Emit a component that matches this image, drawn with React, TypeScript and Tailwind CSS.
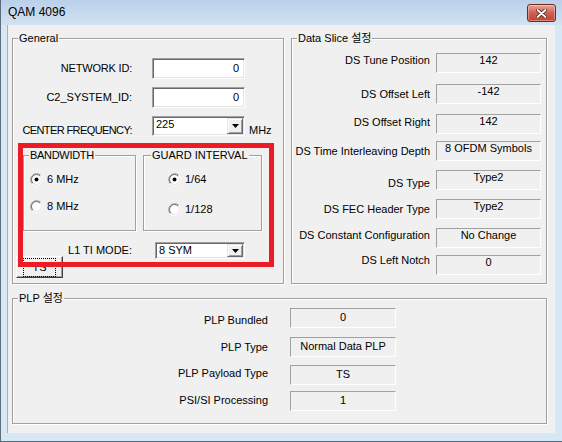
import type { ReactNode } from 'react'

// Classic dialog pieces: etched group boxes, sunken edits, combo boxes, radios

const DS_ROWS = [
  { label: 'DS Tune Position', value: '142', row: 'mt-[14px]', lbl: 'mt-[1px]' },
  { label: 'DS Offset Left', value: '-142', row: 'mt-[11px]', lbl: 'mt-[4px]' },
  { label: 'DS Offset Right', value: '142', row: 'mt-[10px]', lbl: 'mt-[2px]' },
  { label: 'DS Time Interleaving Depth', value: '8 OFDM Symbols', row: 'mt-[7px]', lbl: 'mt-[4px]' },
  { label: 'DS Type', value: 'Type2', row: 'mt-[9px]', lbl: 'mt-[7px]' },
  { label: 'DS FEC Header Type', value: 'Type2', row: 'mt-[9px]', lbl: 'mt-[4px]' },
  { label: 'DS Constant Configuration', value: 'No Change', row: 'mt-[9px]', lbl: 'mt-[1px]' },
  { label: 'DS Left Notch', value: '0', row: 'mt-[7px]', lbl: 'mt-[-1px]' },
]

const PLP_ROWS = [
  { label: 'PLP Bundled', value: '0', row: 'mt-[9px]', lbl: 'mt-[6px]' },
  { label: 'PLP Type', value: 'Normal Data PLP', row: 'mt-[9px]', lbl: 'mt-[4px]' },
  { label: 'PLP Payload Type', value: 'TS', row: 'mt-[8px]', lbl: 'mt-[2px]' },
  { label: 'PSI/SI Processing', value: '1', row: 'mt-[6px]', lbl: 'mt-[3px]' },
]

function GroupBox(props: { title: string; className: string; titleLeft?: string; children?: ReactNode }) {
  return (
    <div
      className={`relative shrink-0 border border-[#a0a0a0] shadow-[inset_1px_1px_0_#fff,1px_1px_0_#fff] ${props.className}`}
    >
      <span
        className={`absolute top-[-7px] whitespace-nowrap bg-[#f0f0f0] px-[1px] leading-[13px] ${props.titleLeft ?? 'left-[5px]'}`}
      >
        {props.title}
      </span>
      {props.children}
    </div>
  )
}

function EditBox(props: { value: string }) {
  return (
    <div className="flex h-[21px] w-[93px] items-center justify-end border border-t-[#a0a0a0] border-l-[#a0a0a0] border-r-white border-b-white bg-white pr-[5px] shadow-[inset_1px_1px_0_#696969,inset_-1px_-1px_0_#e3e3e3]">
      {props.value}
    </div>
  )
}

function DropArrow() {
  return (
    <div className="flex h-full w-[16px] shrink-0 items-center justify-center border border-t-[#e3e3e3] border-l-[#e3e3e3] border-r-[#696969] border-b-[#696969] bg-[#f0f0f0] shadow-[inset_1px_1px_0_#fff,inset_-1px_-1px_0_#a0a0a0]">
      <svg width="7" height="4" viewBox="0 0 7 4">
        <path d="M0 0h7L3.5 4z" fill="#000" />
      </svg>
    </div>
  )
}

function Combo(props: { value: string; className: string }) {
  return (
    <div
      className={`flex shrink-0 border border-t-[#a0a0a0] border-l-[#a0a0a0] border-r-white border-b-white bg-white p-[1px] shadow-[inset_1px_1px_0_#696969,inset_-1px_-1px_0_#e3e3e3] ${props.className}`}
    >
      <div className="flex-1 whitespace-nowrap pl-[2px] leading-[13px]">{props.value}</div>
      <DropArrow />
    </div>
  )
}

function Radio(props: { label: string; checked?: boolean; className?: string }) {
  return (
    <div className={`flex h-[13px] items-center gap-[4px] ${props.className ?? ''}`}>
      <svg width="13" height="13" viewBox="0 0 13 13" className="shrink-0">
        <circle cx="6.5" cy="6.5" r="5" fill="#fff" />
        <path d="M2.26 10.74A6 6 0 0 1 10.74 2.26" stroke="#a0a0a0" fill="none" />
        <path d="M10.74 2.26A6 6 0 0 1 2.26 10.74" stroke="#fff" fill="none" />
        <path d="M2.96 10.04A5 5 0 0 1 10.04 2.96" stroke="#696969" fill="none" />
        <path d="M10.04 2.96A5 5 0 0 1 2.96 10.04" stroke="#e3e3e3" fill="none" />
        {props.checked ? <circle cx="6.5" cy="6.5" r="2" fill="#000" /> : null}
      </svg>
      <span className="whitespace-nowrap leading-[13px]">{props.label}</span>
    </div>
  )
}

function ValueRow(props: { label: string; value: string; row: string; lbl: string; labelW: string; gap: string; boxW: string; boxPad: string }) {
  return (
    <div className={`flex items-start ${props.row}`}>
      <div className={`flex shrink-0 justify-end whitespace-nowrap leading-[13px] ${props.labelW} ${props.lbl}`}>{props.label}</div>
      <div
        className={`h-[20px] shrink-0 whitespace-nowrap border border-t-[#a0a0a0] border-l-[#a0a0a0] border-r-white border-b-white text-center leading-[13px] ${props.gap} ${props.boxW} ${props.boxPad}`}
      >
        {props.value}
      </div>
    </div>
  )
}

function FieldLabel(props: { text: string; className?: string }) {
  return (
    <div className={`flex w-[119px] shrink-0 justify-end whitespace-nowrap leading-[13px] ${props.className ?? ''}`}>
      {props.text}
    </div>
  )
}

function TitleBar() {
  return (
    <div className="flex h-[25px] shrink-0 items-start bg-gradient-to-b from-[#bad0e9] to-[#d3e2f2]">
      <span className="pl-[7px] pt-[5px] text-[12px] leading-[15px] text-black">QAM 4096</span>
      <button className="ml-auto mr-[6px] mt-[4px] flex h-[18px] w-[29px] items-center justify-center rounded-[3px] border border-[#6e2a22] bg-gradient-to-b from-[#e7a597] via-[#cf5f55] to-[#c2432f] shadow-[inset_0_0_0_1px_rgba(255,255,255,0.35)]">
        <svg width="11" height="9" viewBox="0 0 11 9">
          <path d="M1.5 1l8 7M9.5 1l-8 7" stroke="#4a1a14" strokeWidth="3.4" strokeLinecap="round" />
          <path d="M1.5 1l8 7M9.5 1l-8 7" stroke="#fff" strokeWidth="1.8" strokeLinecap="round" />
        </svg>
      </button>
    </div>
  )
}

export default function App() {
  return (
    <div className="relative flex h-[442px] w-[562px] flex-col overflow-hidden border-l border-b border-[#5d6b7a] bg-[#d6e8f6] font-['Liberation_Sans','Noto_Sans_CJK_KR',sans-serif] text-[11px] text-black">
      <TitleBar />
      <div className="ml-[6px] mr-[7px] flex h-[408px] flex-col border-l border-[#9fb2c6] bg-[#f0f0f0] pl-[4px] pt-[13px]">
        <div className="flex gap-[7px]">
          {/* General */}
          <GroupBox title="General" className="h-[246px] w-[272px]">
            <div className="mt-[19px] flex h-[21px] items-center">
              <FieldLabel text="NETWORK ID:" className="tracking-[-0.2px]" />
              <div className="ml-[20px]">
                <EditBox value="0" />
              </div>
            </div>
            <div className="mt-[8px] flex h-[21px] items-center">
              <FieldLabel text="C2_SYSTEM_ID:" />
              <div className="ml-[20px]">
                <EditBox value="0" />
              </div>
            </div>
            <div className="mt-[8px] flex h-[20px] items-start">
              <FieldLabel text="CENTER FREQUENCY:" className="mt-[8px] tracking-[-0.6px]" />
              <Combo value="225" className="ml-[20px] h-[20px] w-[93px]" />
              <span className="ml-[4px] mt-[8px] leading-[13px]">MHz</span>
            </div>

            <div className="ml-[10px] mt-[19px] flex gap-[7px]">
              <GroupBox title="BANDWIDTH" className="h-[76px] w-[113px] tracking-[-0.3px]">
                <Radio label="6 MHz" checked className="ml-[6px] mt-[17px] tracking-normal" />
                <Radio label="8 MHz" className="ml-[6px] mt-[14px] tracking-normal" />
              </GroupBox>
              <GroupBox title="GUARD INTERVAL" titleLeft="left-[7px]" className="h-[76px] w-[119px]">
                <Radio label="1/64" checked className="ml-[24px] mt-[17px]" />
                <Radio label="1/128" className="ml-[24px] mt-[17px]" />
              </GroupBox>
            </div>

            <div className="mt-[11px] flex h-[17px] items-center">
              <FieldLabel text="L1 TI MODE:" className="w-[117px]" />
              <Combo value="8 SYM" className="ml-[23px] h-[17px] w-[90px]" />
            </div>

            <button className="ml-[3px] mt-[-3px] flex h-[22px] w-[47px] items-center justify-center border border-t-white border-l-white border-r-[#404040] border-b-[#404040] bg-[#f0f0f0] shadow-[inset_-1px_-1px_0_#a0a0a0]">
              <span className="px-[6px] leading-[13px] outline-1 outline-offset-[2px] outline-dotted outline-black">TS</span>
            </button>
          </GroupBox>

          {/* Data Slice */}
          <GroupBox title="Data Slice 설정" className="h-[246px] w-[256px]">
            {DS_ROWS.map((r) => (
              <ValueRow key={r.label} {...r} labelW="w-[138px]" gap="ml-[6px]" boxW="w-[105px]" boxPad="pt-0" />
            ))}
          </GroupBox>
        </div>

        {/* PLP */}
        <GroupBox title="PLP 설정" className="mt-[14px] h-[126px] w-[535px]">
          {PLP_ROWS.map((r) => (
            <ValueRow key={r.label} {...r} labelW="w-[255px]" gap="ml-[22px]" boxW="w-[106px]" boxPad="pt-[2px]" />
          ))}
        </GroupBox>
      </div>

      {/* highlight frame drawn over the bandwidth / guard interval block */}
      <div className="pointer-events-none absolute left-[17px] top-[143px] h-[124px] w-[256px] border-[5px] border-[#ed1c24]" />
    </div>
  )
}
